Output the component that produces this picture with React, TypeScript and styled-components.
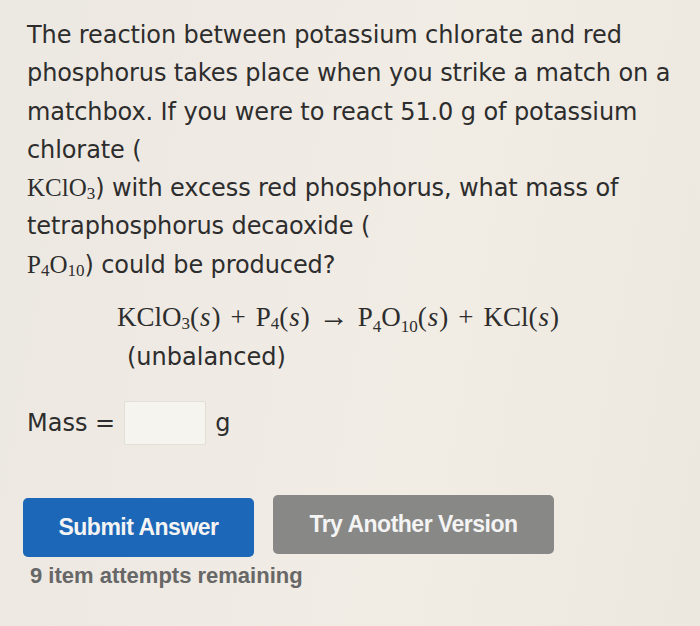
import React from 'react'
import styled, { createGlobalStyle } from 'styled-components'

const Global = createGlobalStyle`
  html, body {
    margin: 0;
    padding: 0;
  }
  body {
    width: 700px;
    height: 626px;
    overflow: hidden;
    background: linear-gradient(100deg, #ece9e2 0%, #efeae3 35%, #f1ece4 60%, #ede8df 100%);
  }
`

const Page = styled.div`
  padding: 16px 0 0 27px;
  font-family: 'DejaVu Sans', Verdana, sans-serif;
  color: #2d2d2d;
`

const Question = styled.p`
  margin: 0;
  font-size: 24px;
  line-height: 38.3px;
  width: 665px;
  letter-spacing: -0.1px;
`

const Chem = styled.span`
  font-family: 'Liberation Serif', 'Times New Roman', serif;
  font-size: 25px;
  letter-spacing: 0;
`

const Sub = styled.span<{ $low?: boolean }>`
  font-size: 17px;
  line-height: 0;
  vertical-align: ${(p) => (p.$low ? '-6px' : '-3px')};
`

const Equation = styled.div`
  margin: 17px 0 0 90px;
  display: flex;
  flex-direction: column;
  gap: 8px;
`

const EqLine = styled.div`
  font-family: 'Liberation Serif', 'Times New Roman', serif;
  font-size: 27px;
  line-height: 32px;
  height: 32px;
  color: #2d2d2d;
  white-space: nowrap;
`

const Op = styled.span<{ $arrow?: boolean }>`
  padding: 0 ${(p) => (p.$arrow ? '9px' : '10px')};
  font-size: ${(p) => (p.$arrow ? '30px' : '27px')};
  line-height: 0;
`

const Italic = styled.i`
  font-style: italic;
  padding: 0 1px;
`

const Note = styled.div`
  font-size: 24px;
  line-height: 32px;
  margin-left: 10px;
`

const MassRow = styled.div`
  display: flex;
  align-items: center;
  margin-top: 28px;
  font-size: 24px;
  gap: 9px;
`

const Input = styled.div`
  width: 80px;
  height: 42px;
  background: #f6f4ef;
  border: 1px solid #e2dfd8;
  border-radius: 2px;
`

const Buttons = styled.div`
  display: flex;
  align-items: flex-start;
  gap: 19px;
  margin: 50px 0 0 -4px;
`

const Button = styled.div<{ $primary?: boolean }>`
  display: flex;
  align-items: center;
  justify-content: center;
  height: 59px;
  width: ${(p) => (p.$primary ? '231px' : '281px')};
  margin-top: ${(p) => (p.$primary ? '3px' : '0')};
  border-radius: 5px;
  background: ${(p) => (p.$primary ? '#1c67b7' : '#888886')};
  color: #f4f4f4;
  font-family: 'Liberation Sans', Arial, sans-serif;
  font-weight: bold;
  font-size: 23px;
  letter-spacing: -0.5px;
`

const Attempts = styled.div`
  margin: 6px 0 0 3px;
  font-family: 'Liberation Sans', Arial, sans-serif;
  font-weight: bold;
  font-size: 22px;
  color: #676767;
`

const App = () => {
  return (
    <Page>
      <Global />
      <Question>
        The reaction between potassium chlorate and red phosphorus takes place when you strike a match on a
        matchbox. If you were to react 51.0 g of potassium chlorate (<br />
        <Chem>
          KClO<Sub>3</Sub>
        </Chem>
        ) with excess red phosphorus, what mass of tetraphosphorus decaoxide (<br />
        <Chem>
          P<Sub>4</Sub>O<Sub>10</Sub>
        </Chem>
        ) could be produced?
      </Question>
      <Equation>
        <EqLine>
          KClO<Sub>3</Sub>(<Italic>s</Italic>)<Op>+</Op>P<Sub>4</Sub>(<Italic>s</Italic>)<Op $arrow>→</Op>P
          <Sub $low>4</Sub>O<Sub $low>10</Sub>(<Italic>s</Italic>)<Op>+</Op>KCl(<Italic>s</Italic>)
        </EqLine>
        <Note>(unbalanced)</Note>
      </Equation>
      <MassRow>
        Mass =
        <Input />
        g
      </MassRow>
      <Buttons>
        <Button $primary>Submit Answer</Button>
        <Button>Try Another Version</Button>
      </Buttons>
      <Attempts>9 item attempts remaining</Attempts>
    </Page>
  )
}

export default App
